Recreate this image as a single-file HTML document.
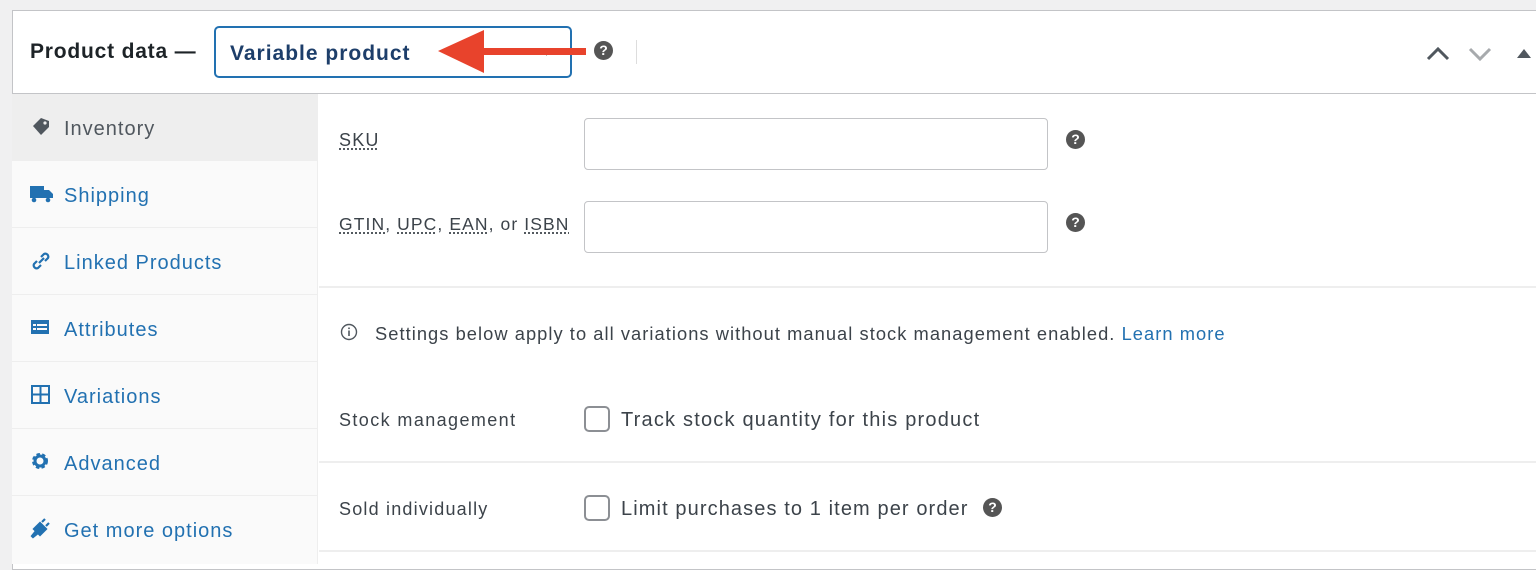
<!DOCTYPE html>
<html><head><meta charset="utf-8"><style>
*{margin:0;padding:0;box-sizing:border-box}
body{width:1536px;height:562px;overflow:hidden;background:#f0f0f1;font-family:"Liberation Sans",sans-serif;position:relative;color:#3c434a}
.a{position:absolute;white-space:nowrap}
.panel{position:absolute;left:12px;top:10px;width:1530px;height:560px;background:#fff;border:1px solid #c3c4c7}
.side{position:absolute;left:12px;top:94px;width:306px;height:470px;background:#fafafa;border-right:1px solid #eee}
.item{position:absolute;left:0;width:306px;height:67px;border-bottom:1px solid #eee;color:#2271b1;font-size:20px;letter-spacing:1px}
.item span{position:absolute;left:52px;top:24px}
.item svg{position:absolute;left:18px;top:22px}
.lbl{font-size:18px;color:#3c434a;letter-spacing:1.2px}
.inp{position:absolute;left:584px;width:464px;height:52px;border:1px solid #c3c4c7;border-radius:4px;background:#fff}
.q{position:absolute;width:19px;height:19px;border-radius:50%;background:#555;color:#fff;font-size:14px;font-weight:bold;text-align:center;line-height:19px}
.hr{position:absolute;left:319px;width:1217px;height:2px;background:#eee}
.cb{position:absolute;left:584px;width:26px;height:26px;border:2px solid #8c8f94;border-radius:5px;background:#fff}
u{text-decoration:underline dotted;text-underline-offset:3px}
</style></head><body>
<div class="panel"></div>
<div class="a" style="left:12px;top:93px;width:1524px;height:1px;background:#c3c4c7"></div>
<div class="a" style="left:30px;top:40px;font-size:21px;font-weight:bold;color:#1d2327;letter-spacing:0.8px">Product data —</div>
<div class="a" style="left:214px;top:26px;width:358px;height:52px;border:2px solid #2271b1;border-radius:5px"></div>
<div class="a" style="left:230px;top:42px;font-size:21px;font-weight:bold;color:#1d3e6a;letter-spacing:1px">Variable product</div>
<div class="a" style="left:544px;top:48px;font-size:10px;color:#555">▾</div>
<svg class="a" style="left:438px;top:30px" width="152" height="44"><rect x="40" y="18" width="108" height="7" fill="#e8432c"/><polygon points="0,21 46,0 46,43" fill="#e8432c"/></svg>
<div class="q" style="left:594px;top:41px">?</div>
<div class="a" style="left:636px;top:40px;width:1px;height:24px;background:#ddd"></div>
<svg class="a" style="left:1425px;top:44px" width="110" height="20"><polyline points="3,15 13,5 23,15" fill="none" stroke="#50575e" stroke-width="3"/><polyline points="45,5 55,15 65,5" fill="none" stroke="#a7aaad" stroke-width="3"/><polygon points="92,14 99,5 106,14" fill="#50575e"/></svg>
<div class="side">
<div class="item" style="top:0;background:#eee;color:#50575e"><svg width="22" height="22" viewBox="0 0 22 22"><path d="M3 10 L11 2 L19 5 L19 11 L11 19 Z" fill="#50575e"/><circle cx="15" cy="7" r="1.6" fill="#eee"/></svg><span>Inventory</span></div>
<div class="item" style="top:67px"><svg width="24" height="22"><rect x="0" y="3" width="14" height="12" fill="#2271b1"/><path d="M14 7h5l4 4v4h-9z" fill="#2271b1"/><circle cx="4" cy="17" r="2.3" fill="#2271b1"/><circle cx="18" cy="17" r="2.3" fill="#2271b1"/></svg><span>Shipping</span></div>
<div class="item" style="top:134px"><svg width="22" height="22"><path d="M9 13 L14 8 M7 11 L4 14 a3 3 0 0 0 4 4 L11 15 M11 7 L14 4 a3 3 0 0 1 4 4 L15 11" stroke="#2271b1" stroke-width="2.2" fill="none"/></svg><span>Linked Products</span></div>
<div class="item" style="top:201px"><svg width="22" height="22"><rect x="1" y="3" width="18" height="14" fill="#2271b1"/><rect x="3" y="7" width="3" height="2" fill="#fafafa"/><rect x="7" y="7" width="10" height="2" fill="#fafafa"/><rect x="3" y="11" width="3" height="2" fill="#fafafa"/><rect x="7" y="11" width="10" height="2" fill="#fafafa"/></svg><span>Attributes</span></div>
<div class="item" style="top:268px"><svg width="22" height="22"><rect x="2" y="2" width="17" height="17" fill="none" stroke="#2271b1" stroke-width="2"/><path d="M10.5 2v17M2 10.5h17" stroke="#2271b1" stroke-width="2"/></svg><span>Variations</span></div>
<div class="item" style="top:335px"><svg width="22" height="22"><circle cx="10" cy="10" r="6" fill="none" stroke="#2271b1" stroke-width="4" stroke-dasharray="3 2"/><circle cx="10" cy="10" r="5" fill="none" stroke="#2271b1" stroke-width="3"/></svg><span>Advanced</span></div>
<div class="item" style="top:402px;border:none"><svg width="22" height="22"><path d="M2 18 L6 13 L4 11 L10 5 L16 11 L10 17 L8 15 L3 19Z M12 4 L15 1 M16 8 L19 5" stroke="#2271b1" stroke-width="2.2" fill="#2271b1"/></svg><span>Get more options</span></div>
</div>
<div class="a lbl" style="left:339px;top:130px"><u>SKU</u></div>
<div class="inp" style="top:118px"></div>
<div class="q" style="left:1066px;top:130px">?</div>
<div class="a lbl" style="left:339px;top:214px;font-size:17.5px;letter-spacing:1.1px"><u>GTIN</u>, <u>UPC</u>, <u>EAN</u>, or <u>ISBN</u></div>
<div class="inp" style="top:201px"></div>
<div class="q" style="left:1066px;top:213px">?</div>
<div class="hr" style="top:286px"></div>
<svg class="a" style="left:340px;top:323px" width="18" height="18"><circle cx="9" cy="9" r="7.5" fill="none" stroke="#50575e" stroke-width="1.4"/><rect x="8.2" y="7.5" width="1.6" height="5.5" fill="#50575e"/><rect x="8.2" y="4.5" width="1.6" height="1.6" fill="#50575e"/></svg>
<div class="a lbl" style="left:375px;top:323px;font-size:18.3px;letter-spacing:1.05px">Settings below apply to all variations without manual stock management enabled. <span style="color:#2271b1">Learn more</span></div>
<div class="a lbl" style="left:339px;top:410px;letter-spacing:1.4px">Stock management</div>
<div class="cb" style="top:406px"></div>
<div class="a" style="left:621px;top:409px;font-size:20px;letter-spacing:1.2px">Track stock quantity for this product</div>
<div class="hr" style="top:461px"></div>
<div class="a lbl" style="left:339px;top:499px">Sold individually</div>
<div class="cb" style="top:495px"></div>
<div class="a" style="left:621px;top:498px;font-size:20px;letter-spacing:1.1px">Limit purchases to 1 item per order</div>
<div class="q" style="left:983px;top:498px">?</div>
<div class="hr" style="top:550px"></div>
</body></html>
